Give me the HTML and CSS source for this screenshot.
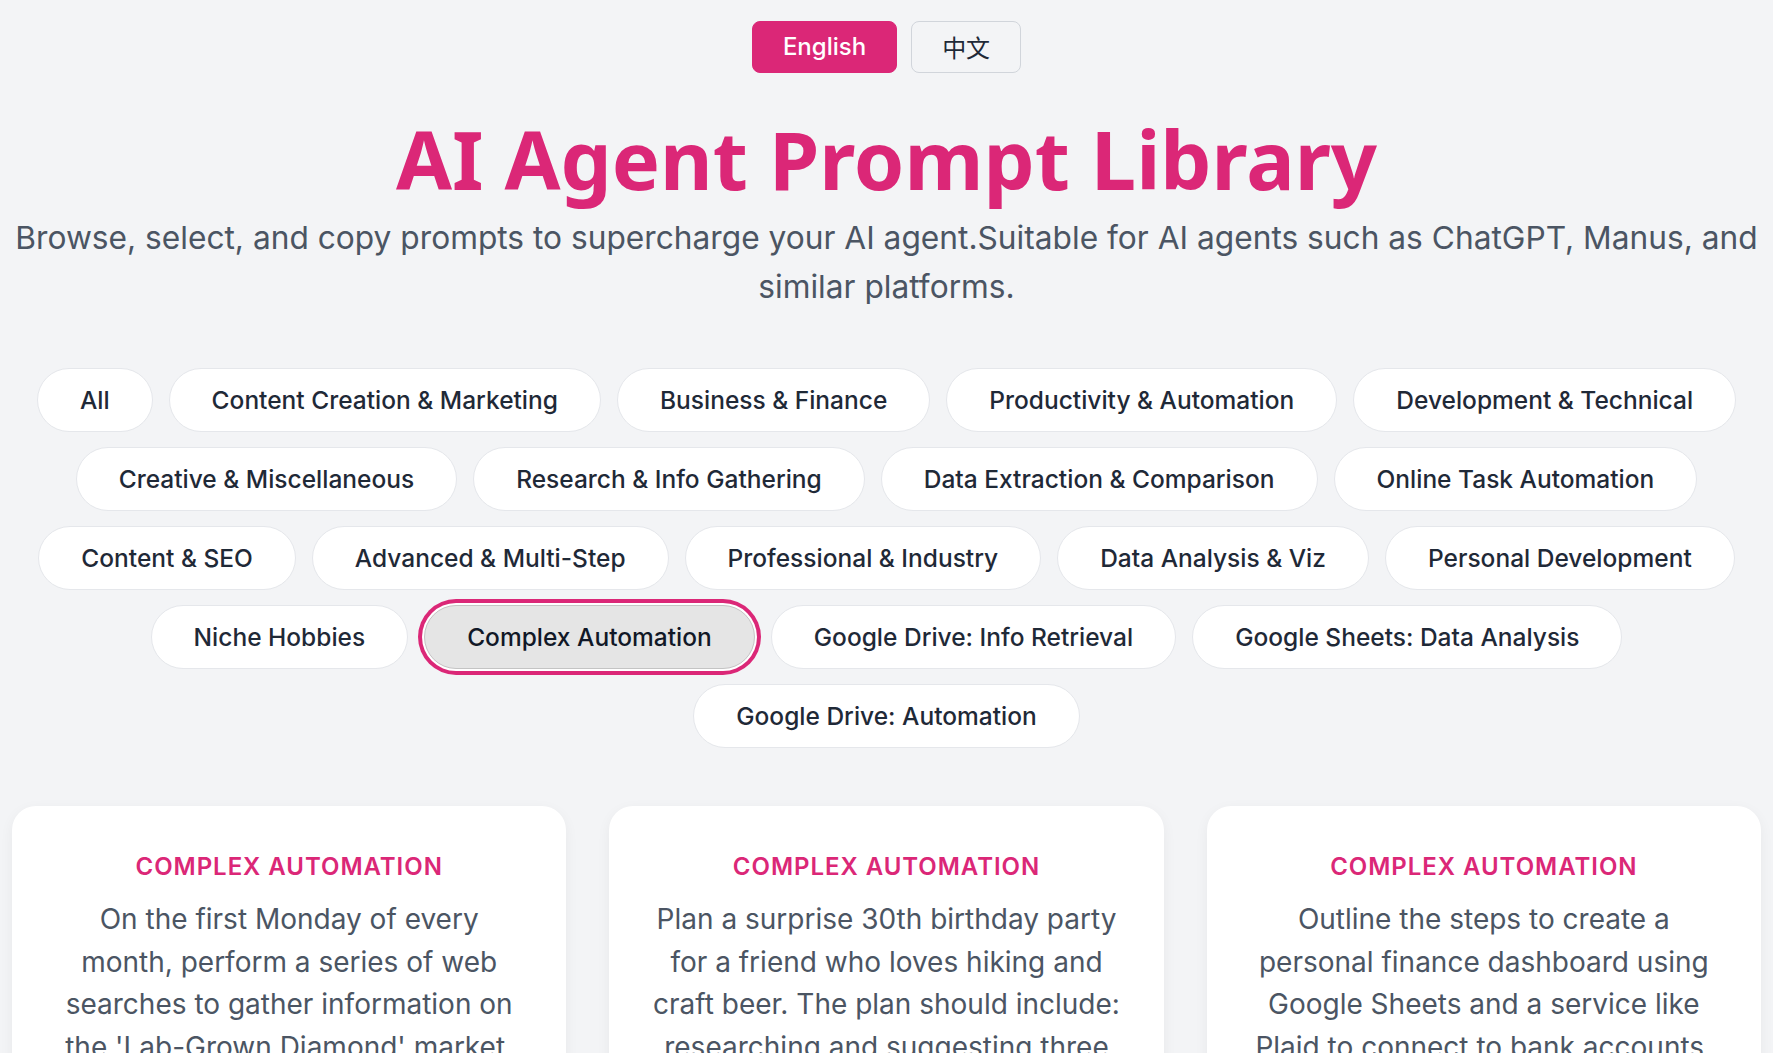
FILE: index.html
```html
<!DOCTYPE html>
<html lang="en">
<head>
<meta charset="utf-8">
<title>AI Agent Prompt Library</title>
<link rel="stylesheet" href="styles.css">
</head>
<body>
	<div class="lang-bar">
		<button class="lang-btn active">English</button>
		<button class="lang-btn cjk">中文</button>
	</div>

	<header class="hero">
		<h1 class="title">AI Agent Prompt Library</h1>
		<p class="subtitle">Browse, select, and copy prompts to supercharge your AI agent.Suitable for AI agents such as ChatGPT, Manus, and similar platforms.</p>
	</header>

	<nav class="categories">
		<button class="chip">All</button>
		<button class="chip">Content Creation &amp; Marketing</button>
		<button class="chip">Business &amp; Finance</button>
		<button class="chip">Productivity &amp; Automation</button>
		<button class="chip">Development &amp; Technical</button>
		<button class="chip">Creative &amp; Miscellaneous</button>
		<button class="chip">Research &amp; Info Gathering</button>
		<button class="chip">Data Extraction &amp; Comparison</button>
		<button class="chip">Online Task Automation</button>
		<button class="chip">Content &amp; SEO</button>
		<button class="chip">Advanced &amp; Multi-Step</button>
		<button class="chip">Professional &amp; Industry</button>
		<button class="chip">Data Analysis &amp; Viz</button>
		<button class="chip">Personal Development</button>
		<button class="chip">Niche Hobbies</button>
		<button class="chip selected">Complex Automation</button>
		<button class="chip">Google Drive: Info Retrieval</button>
		<button class="chip">Google Sheets: Data Analysis</button>
		<button class="chip">Google Drive: Automation</button>
	</nav>

	<main class="cards">
		<div class="card">
			<div class="card-category">Complex Automation</div>
			<p class="card-text">On the first Monday of every month, perform a series of web searches to gather information on the 'Lab-Grown Diamond' market, including recent news, pricing trends and major players, then compile the findings into a short summary report.</p>
		</div>
		<div class="card">
			<div class="card-category">Complex Automation</div>
			<p class="card-text">Plan a surprise 30th birthday party for a friend who loves hiking and craft beer. The plan should include: researching and suggesting three local venues, drafting a guest list and writing the invitation text.</p>
		</div>
		<div class="card">
			<div class="card-category">Complex Automation</div>
			<p class="card-text">Outline the steps to create a personal finance dashboard using Google Sheets and a service like Plaid to connect to bank accounts. Include how to categorize spending and build monthly charts.</p>
		</div>
	</main>
</body>
</html>
```

FILE: styles.css
```css
body
{
	margin: 0;
	padding-top: 21px;
	background-color: #f3f4f6;
	font-family: Inter, "Noto Sans", sans-serif;
	color: #1f2937;
}

.lang-bar
{
	display: flex;
	justify-content: center;
	gap: 14px;
}

.lang-btn
{
	font-family: Inter, "Noto Sans CJK SC", sans-serif;
	font-size: 24px;
	font-weight: 500;
	line-height: 36px;
	padding: 7px 30px;
	border: 1px solid #d1d5db;
	border-radius: 8px;
	background-color: #f3f4f6;
	color: #1f2937;
}

.lang-btn.active
{
	background-color: #db2777;
	border-color: #db2777;
	color: white;
}

.lang-btn.cjk
{
	font-family: "Noto Sans CJK SC", sans-serif;
	font-weight: 400;
}

.hero
{
	text-align: center;
	padding: 0 6px;
}

.title
{
	margin: 38px 0 0;
	font-family: "Noto Sans", sans-serif;
	font-size: 81px;
	line-height: 96px;
	font-weight: 700;
	color: #db2777;
}

.subtitle
{
	margin: 7px 0 0;
	font-size: 31.7px;
	line-height: 48.5px;
	color: #4b5563;
}

.categories
{
	display: flex;
	flex-wrap: wrap;
	justify-content: center;
	column-gap: 16px;
	row-gap: 15px;
	padding: 0 16px;
	margin-top: 57px;
}

.chip
{
	font-family: Inter, "Noto Sans", sans-serif;
	font-size: 24.5px;
	font-weight: 500;
	line-height: 36px;
	padding: 13px 42px;
	border: 1px solid #e5e7eb;
	border-radius: 999px;
	background-color: white;
	color: #1f2937;
}

.chip.selected
{
	background-color: #e5e5e5;
	border-color: #c4c4c4;
	color: #111827;
	box-shadow: 0 0 0 2px white, 0 0 0 6px #db2777;
}

.cards
{
	display: grid;
	grid-template-columns: repeat(3, 1fr);
	gap: 43px;
	padding: 0 12px;
	margin-top: 58px;
}

.card
{
	background-color: white;
	border-radius: 24px;
	padding: 43px 40px 48px;
	text-align: center;
	box-shadow: 0 4px 14px rgba(0, 0, 0, 0.05);
}

.card-category
{
	font-size: 24px;
	line-height: 36px;
	font-weight: 600;
	letter-spacing: 0.04em;
	text-transform: uppercase;
	color: #db2777;
	margin-bottom: 13px;
}

.card-text
{
	margin: 0;
	font-size: 28px;
	line-height: 42.5px;
	color: #4b5563;
}
```
